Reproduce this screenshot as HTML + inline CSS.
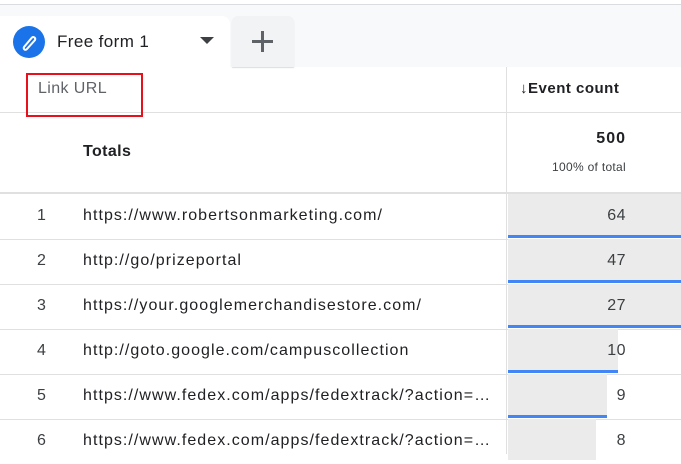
<html><head><style>
body{margin:0;width:681px;height:454px;overflow:hidden;background:#fff;font-family:"Liberation Sans",Arial,sans-serif;color:#202124;position:relative}
.a{position:absolute}
.row{position:absolute;left:0;width:681px;height:45px;border-bottom:1px solid #e0e0e0}
.n{position:absolute;left:37px;top:13px;font-size:16px;color:#3c4043}
.u{position:absolute;left:83px;top:13px;font-size:16px;color:#202124;letter-spacing:1.05px}
.bar{position:absolute;left:508px;top:0;height:41px;background:#ebebeb}
.bl{position:absolute;left:508px;top:41px;height:3px;background:#4285f4}
.v{position:absolute;right:55px;top:13px;font-size:16px;color:#3c4043;letter-spacing:0.5px}
</style></head><body>
<div class="a" style="left:0;top:0;width:681px;height:67px;background:#f8f9fa;border-top:4px solid #fff;box-sizing:border-box"></div>
<div class="a" style="left:0;top:4px;width:681px;height:1px;background:#dadce0"></div>
<div class="a" style="left:0;top:16px;width:230px;height:52px;background:#fff;border-radius:0 8px 0 0"></div>
<div class="a" style="left:232px;top:16px;width:62px;height:51px;background:#f1f3f4;border-radius:6px 6px 0 0;box-shadow:0 1px 1px #dadce0"></div>
<div class="a" style="left:13px;top:26px;width:32px;height:32px;border-radius:50%;background:#1a73e8"></div>
<svg class="a" style="left:13px;top:26px" width="32" height="32"><path d="M11 21 L19 11.5 a2 2 0 0 1 3 2.5 L14 23 a1.5 1.5 0 0 1 -3 -2z" fill="none" stroke="#fff" stroke-width="2"/></svg>
<div class="a" style="left:57px;top:32px;font-size:17px;letter-spacing:0.4px">Free form 1</div>
<div class="a" style="left:200px;top:37px;width:0;height:0;border-left:7px solid transparent;border-right:7px solid transparent;border-top:7px solid #3c4043"></div>
<div class="a" style="left:252px;top:40px;width:21px;height:3px;background:#5f6368"></div>
<div class="a" style="left:261px;top:31px;width:3px;height:21px;background:#5f6368"></div>
<div class="a" style="left:0;top:112px;width:681px;height:1px;background:#e0e0e0"></div>
<div class="a" style="left:506px;top:67px;width:1px;height:387px;background:#e0e0e0"></div>
<div class="a" style="left:38px;top:80px;font-size:16px;color:#5f6368;letter-spacing:0.4px">Link URL</div>
<div class="a" style="left:26px;top:73px;width:113px;height:40px;border:2px solid #e8101a"></div>
<div class="a" style="left:520px;top:80px;font-size:15px;font-weight:bold;letter-spacing:0.5px">↓Event count</div>
<div class="a" style="left:83px;top:143px;font-size:16px;font-weight:bold;letter-spacing:0.4px">Totals</div>
<div class="a" style="right:55px;top:130px;font-size:16px;font-weight:bold;letter-spacing:1px">500</div>
<div class="a" style="right:55px;top:160px;font-size:12px;color:#3c4043;letter-spacing:0.3px">100% of total</div>
<div class="a" style="left:0;top:192px;width:681px;height:2px;background:#e0e0e0"></div>
<div class="row" style="top:194px"><div class="bar" style="width:173px"></div><div class="bl" style="width:173px"></div><span class="n">1</span><span class="u">https://www.robertsonmarketing.com/</span><span class="v">64</span></div>
<div class="row" style="top:239px"><div class="bar" style="width:173px"></div><div class="bl" style="width:173px"></div><span class="n">2</span><span class="u">http://go/prizeportal</span><span class="v">47</span></div>
<div class="row" style="top:284px"><div class="bar" style="width:173px"></div><div class="bl" style="width:173px"></div><span class="n">3</span><span class="u">https://your.googlemerchandisestore.com/</span><span class="v">27</span></div>
<div class="row" style="top:329px"><div class="bar" style="width:110px"></div><div class="bl" style="width:110px"></div><span class="n">4</span><span class="u">http://goto.google.com/campuscollection</span><span class="v">10</span></div>
<div class="row" style="top:374px"><div class="bar" style="width:99px"></div><div class="bl" style="width:99px"></div><span class="n">5</span><span class="u">https://www.fedex.com/apps/fedextrack/?action=…</span><span class="v">9</span></div>
<div class="row" style="top:419px;border-bottom:none"><div class="bar" style="width:88px"></div><span class="n">6</span><span class="u">https://www.fedex.com/apps/fedextrack/?action=…</span><span class="v">8</span></div>
</body></html>
